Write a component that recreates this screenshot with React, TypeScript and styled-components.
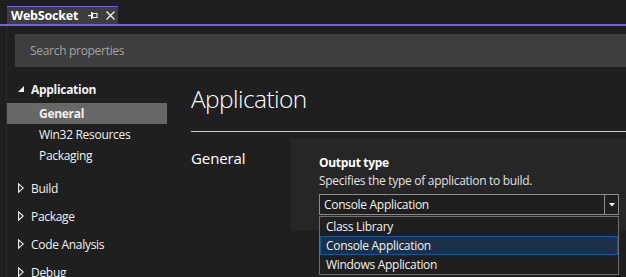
import React from "react";
import styled, { createGlobalStyle } from "styled-components";

const FONT = `"Open Sans", "Noto Sans", sans-serif`;

const Global = createGlobalStyle`
  html, body { margin: 0; padding: 0; background: #1f1f1f; }
  body { width: 626px; height: 277px; overflow: hidden; font-family: ${FONT}; color: #f1f1f1; }
`;

const Page = styled.div`
  width: 626px;
  height: 277px;
  overflow: hidden;
  display: flex;
  flex-direction: column;
  background: #1f1f1f;
  letter-spacing: -0.3px;
`;

const TabStrip = styled.div`
  height: 24px;
  display: flex;
  align-items: flex-end;
  padding-left: 7px;
  border-bottom: 2px solid #7160e8;
`;

const Tab = styled.div`
  height: 18px;
  width: 111px;
  box-sizing: border-box;
  border-top: 1px solid #7160e8;
  background: #3d3d3d;
  display: flex;
  align-items: center;
  padding-left: 4px;
  gap: 10px;
`;

const TabTitle = styled.span`
  font-size: 12.5px;
  font-weight: 700;
  color: #ffffff;
  letter-spacing: -0.2px;
`;

const TabIcons = styled.span`
  display: flex;
  align-items: center;
  gap: 8px;
`;

const Body = styled.div`
  flex: 1;
  display: flex;
  flex-direction: column;
  margin-left: 6px;
  border-left: 1px solid #2b2b2b;
  min-height: 0;
`;

const Search = styled.div`
  margin: 8px 0 0 8px;
  height: 33px;
  background: #3e3e3e;
  display: flex;
  align-items: center;
  padding-left: 15px;
  font-size: 12px;
  color: #a3a3a3;
`;

const Columns = styled.div`
  display: flex;
  flex: 1;
  min-height: 0;
`;

const Nav = styled.nav`
  width: 160px;
  flex-shrink: 0;
  padding-top: 8px;
  font-size: 12px;
`;

const Group = styled.div<{ $open?: boolean }>`
  margin-bottom: ${(p) => (p.$open ? "8px" : "0")};
`;

const GroupHeader = styled.div<{ $bold?: boolean }>`
  height: 28px;
  display: flex;
  align-items: center;
  padding-left: 11px;
  gap: 7px;
  font-weight: ${(p) => (p.$bold ? 700 : 400)};
  color: #f1f1f1;
`;

const Arrow = styled.span`
  width: 6px;
  display: flex;
  align-items: center;
`;

const NavItem = styled.div<{ $selected?: boolean }>`
  height: 21px;
  display: flex;
  align-items: center;
  padding-left: 32px;
  background: ${(p) => (p.$selected ? "#676767" : "transparent")};
  font-weight: ${(p) => (p.$selected ? 700 : 400)};
  color: #f1f1f1;
`;

const Main = styled.main`
  flex: 1;
  min-width: 0;
  margin-left: 24px;
  padding-top: 15px;
`;

const Title = styled.h1`
  margin: 0;
  font-size: 24.5px;
  line-height: 34px;
  font-weight: 300;
  letter-spacing: -0.6px;
  color: #ffffff;
  padding-bottom: 15px;
  border-bottom: 1px solid #d0d0d0;
`;

const SectionRow = styled.div`
  display: flex;
  margin-top: 6px;
`;

const SectionLabel = styled.div`
  width: 100px;
  flex-shrink: 0;
  padding-top: 10px;
  font-size: 15px;
  line-height: 20px;
  letter-spacing: -0.1px;
  color: #ffffff;
`;

const Panel = styled.div`
  flex: 1;
  background: #262626;
  padding: 16px 7px 16px 28px;
`;

const PropName = styled.div`
  font-size: 12px;
  font-weight: 700;
  line-height: 18px;
  color: #ffffff;
`;

const PropDesc = styled.div`
  font-size: 12px;
  line-height: 18px;
  color: #e0e0e0;
  margin-bottom: 4px;
`;

const Combo = styled.div`
  position: relative;
  height: 21px;
  box-sizing: border-box;
  border: 1px solid #8b8b8b;
  background: #1f1f1f;
  display: flex;
  align-items: center;
`;

const ComboValue = styled.span`
  flex: 1;
  padding-left: 4px;
  font-size: 12px;
  color: #f1f1f1;
`;

const ComboButton = styled.span`
  width: 13px;
  height: 100%;
  border-left: 1px solid #8b8b8b;
  display: flex;
  align-items: center;
  justify-content: center;
`;

const Menu = styled.div`
  position: absolute;
  left: -1px;
  right: -1px;
  top: 21px;
  border: 1px solid #6f6f6f;
  background: #1f1f1f;
  z-index: 2;
`;

const MenuItem = styled.div<{ $selected?: boolean }>`
  height: 19px;
  box-sizing: border-box;
  display: flex;
  align-items: center;
  padding-left: 5px;
  font-size: 12px;
  color: #f1f1f1;
  border: 1px solid ${(p) => (p.$selected ? "#0f5a9c" : "transparent")};
  background: ${(p) => (p.$selected ? "#1b3049" : "transparent")};
`;

const PinIcon = () => (
  <svg width="10" height="8" viewBox="0 0 10 8">
    <rect x="0" y="3" width="3" height="1.2" fill="#f1f1f1" />
    <rect x="3" y="0" width="1.4" height="7" fill="#f1f1f1" />
    <rect x="4.4" y="1.5" width="4.6" height="4" fill="none" stroke="#f1f1f1" strokeWidth="1.1" />
  </svg>
);

const CloseIcon = () => (
  <svg width="9" height="9" viewBox="0 0 9 9">
    <path d="M0.5 0.5 L8.5 8.5 M8.5 0.5 L0.5 8.5" stroke="#f1f1f1" strokeWidth="1.3" />
  </svg>
);

const ExpandedArrow = () => (
  <svg width="6" height="6" viewBox="0 0 6 6">
    <path d="M6 0 L6 6 L0 6 Z" fill="#f1f1f1" />
  </svg>
);

const CollapsedArrow = () => (
  <svg width="6" height="10" viewBox="0 0 6 10">
    <path d="M0.6 0.8 L5.2 5 L0.6 9.2 Z" fill="none" stroke="#f1f1f1" strokeWidth="1.1" />
  </svg>
);

const DropArrow = () => (
  <svg width="6" height="4" viewBox="0 0 6 4">
    <path d="M0 0 L6 0 L3 3.5 Z" fill="#f1f1f1" />
  </svg>
);

const collapsed = ["Build", "Package", "Code Analysis", "Debug"];

export default function App() {
  return (
    <Page>
      <Global />
      <TabStrip>
        <Tab>
          <TabTitle>WebSocket</TabTitle>
          <TabIcons>
            <PinIcon />
            <CloseIcon />
          </TabIcons>
        </Tab>
      </TabStrip>
      <Body>
        <Search>Search properties</Search>
        <Columns>
          <Nav>
            <Group $open>
              <GroupHeader $bold>
                <Arrow>
                  <ExpandedArrow />
                </Arrow>
                Application
              </GroupHeader>
              <NavItem $selected>General</NavItem>
              <NavItem>Win32 Resources</NavItem>
              <NavItem>Packaging</NavItem>
            </Group>
            {collapsed.map((name) => (
              <Group key={name}>
                <GroupHeader>
                  <Arrow>
                    <CollapsedArrow />
                  </Arrow>
                  {name}
                </GroupHeader>
              </Group>
            ))}
          </Nav>
          <Main>
            <Title>Application</Title>
            <SectionRow>
              <SectionLabel>General</SectionLabel>
              <Panel>
                <PropName>Output type</PropName>
                <PropDesc>Specifies the type of application to build.</PropDesc>
                <Combo>
                  <ComboValue>Console Application</ComboValue>
                  <ComboButton>
                    <DropArrow />
                  </ComboButton>
                  <Menu>
                    <MenuItem>Class Library</MenuItem>
                    <MenuItem $selected>Console Application</MenuItem>
                    <MenuItem>Windows Application</MenuItem>
                  </Menu>
                </Combo>
              </Panel>
            </SectionRow>
          </Main>
        </Columns>
      </Body>
    </Page>
  );
}
